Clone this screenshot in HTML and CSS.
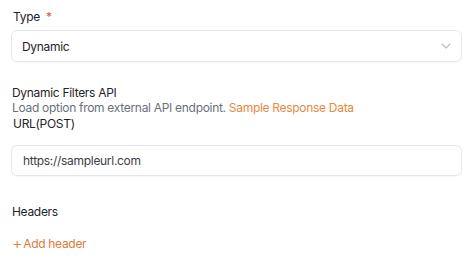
FILE: index.html
```html
<!DOCTYPE html>
<html>
<head>
<meta charset="utf-8">
<link rel="stylesheet" href="styles.css">
</head>
<body>
<div class="form">
  <div class="field">
    <div class="label">Type <span class="req">*</span></div>
    <div class="control select">
      <span class="value">Dynamic</span>
      <svg class="chev" width="10" height="6" viewBox="0 0 10 6"><path d="M1 1l4 4 4-4" fill="none" stroke="#b8bcc4" stroke-width="1.1" stroke-linecap="round" stroke-linejoin="round"/></svg>
    </div>
  </div>
  <div class="section">
    <div class="title">Dynamic Filters API</div>
    <div class="desc">Load option from external API endpoint. <a class="link">Sample Response Data</a></div>
    <div class="sublabel">URL(POST)</div>
    <div class="control input"><span class="value muted">https://sampleurl.com</span></div>
  </div>
  <div class="headers">
    <div class="title">Headers</div>
    <div class="add"><span class="plus">+</span>Add header</div>
  </div>
</div>
</body>
</html>
```
FILE: styles.css
```css
* { box-sizing: border-box; }
html, body { margin: 0; padding: 0; background: #fff; }
body { font-family: Inter, "Noto Sans", sans-serif; font-size: 12px; letter-spacing: -0.3px; color: #1f2328; }
.form { padding: 7px 12px 0 11px; display: flex; flex-direction: column; }
.label { line-height: 20px; padding-left: 2px; margin-bottom: 3px; }
.req { color: #d9534f; margin-left: 3px; }
.control { height: 32px; border: 1px solid #e6e7ea; border-radius: 6px; display: flex; align-items: center; justify-content: space-between; padding: 0 10px 0 10px; box-shadow: 0 1px 1px rgba(0,0,0,0.03); }
.value { color: #1f2328; }
.muted { color: #3b4048; }
.input { height: 31px; padding-left: 11px; }
.section { margin-top: 23px; padding-left: 1px; }
.title { line-height: 15px; }
.desc { line-height: 15px; color: #6b7078; }
.link { color: #e8893d; text-decoration: none; }
.sublabel { line-height: 15px; margin-top: 1px; margin-bottom: 14px; padding-left: 1px; }
.section .control { margin-left: -1px; }
.headers { margin-top: 28px; padding-left: 1px; }
.add { color: #e07a35; line-height: 15px; margin-top: 17px; display: flex; align-items: center; }
.plus { font-size: 16px; margin-right: 1px; font-weight: 300; }
```
